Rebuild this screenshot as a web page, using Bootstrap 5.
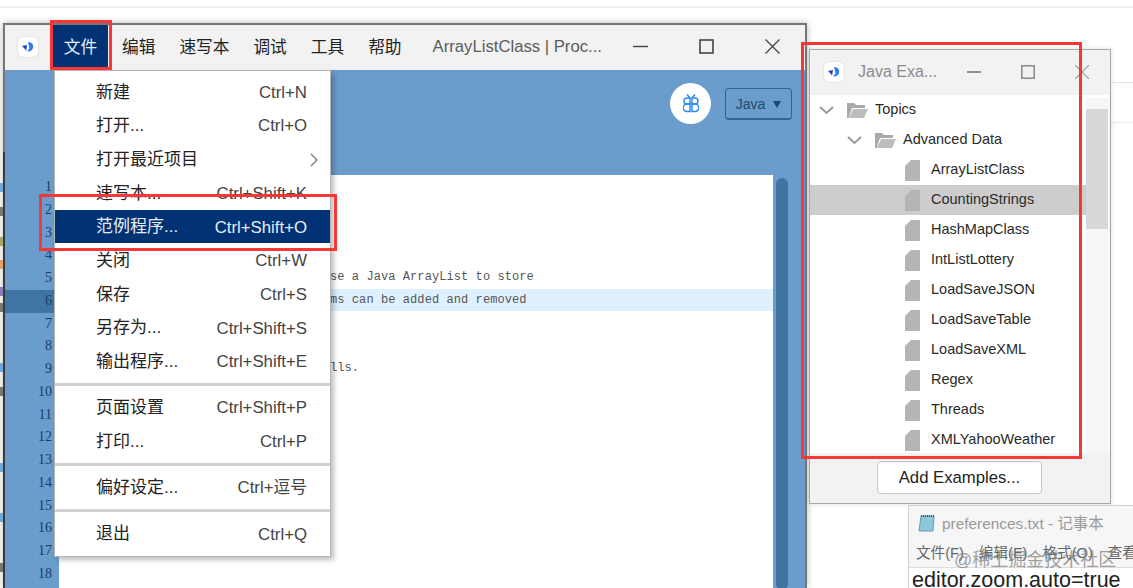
<!DOCTYPE html>
<html lang="zh"><head><meta charset="utf-8"><title>Processing</title>
<link href="https://cdn.jsdelivr.net/npm/bootstrap@5.3.0/dist/css/bootstrap.min.css" rel="stylesheet">
<style>
html,body{margin:0;width:1133px;height:588px;overflow:hidden;background:#fff}
body{font-family:"Liberation Sans","Noto Sans CJK SC",sans-serif;color:#222;position:relative}
.desk-line{position:absolute;left:0;right:0;top:6px;height:2px;background:#efefef}
.desk-line.l2{left:1111px;top:82px;height:1px;background:#e4e4e4}
.desk-line.l3{left:1111px;top:122px;height:1px;background:#ececec}
.win{position:absolute;background:#f2f2f2}
.win-main{left:3px;top:23px;width:804px;height:565px;border:2px solid #777;border-bottom:0;box-shadow:0 0 7px rgba(0,0,0,.28)}
.title-main{height:45px;font-size:16.7px;padding-bottom:1px}
.app-ico{width:20px;height:20px;background:#fff;border-radius:5px;box-shadow:0 0 2px rgba(0,0,0,.2)}
.ico-main{margin-left:13px}
.top-item{height:45px;line-height:45px;padding:0 12px}
.top-item.first{margin-left:15px;margin-right:2px;width:55px;background:#003274;color:#e6ecf5;text-align:center;padding:0;margin-top:1px}
.tb-name{margin-left:19px;width:190px;color:#5c5c5c;font-size:16.7px;white-space:nowrap}
.tb-btns{margin-left:auto;padding-right:25px;padding-bottom:2px;gap:51px}
.body-main{height:520px;background:#6a9dcb;position:relative}
.mode-bar{height:105px;padding:13px 13px 0 0;gap:14px}
.debug-ball{width:41px;height:41px;border-radius:50%;background:#fff}
.mode-btn{width:67px;height:32px;border:1px solid #2c6596;border-bottom-width:2px;border-radius:4px;color:#1d4a73;font-size:14px;gap:8px;margin-top:5px;padding-top:1px}
.mode-arr{width:0;height:0;border-left:4px solid transparent;border-right:4px solid transparent;border-top:7px solid #1d4a73}
.edit-wrap{height:415px;padding-left:54px}
.gutter{position:absolute;left:0;top:106px;width:54px;font-family:"Liberation Serif",serif;font-size:14px;color:#1c3c63;text-align:right}
.gnum{height:22.76px;line-height:22.76px;padding-right:7px}
.gnum.cur{background:#3f75a3}
.editor{width:714px;height:415px;background:#fff;font-family:"Liberation Mono",monospace;font-size:12px;letter-spacing:.08px;color:#555;position:relative}
.cline{height:22.7px;line-height:22.7px;padding-left:271px;white-space:pre}
.cline.cur{background:#dff1fe}
.spacer-l{height:91px}
.vbar{width:17px;height:415px;padding:3px 2px 0 3px}
.vthumb{height:100%;background:#3f74a1;border-radius:6px}
.menu-pop{position:absolute;left:49px;top:0;width:277px;height:487px;background:#fff;border:1px solid #b5b5b5;box-shadow:3px 3px 5px rgba(0,0,0,.25);padding-top:4px;font-size:17px;color:#222}
.mrow{height:33.7px;padding:1px 23px 0 41px}
.mrow .sc{margin-left:auto;color:#444;font-size:16.8px}
.mrow.hot{background:#003274;color:#e6ecf5}
.mrow.hot .sc{color:#e6ecf5}
.msep{height:2.5px;background:#d2d2d2;margin:5px 0}
.chev{margin-left:auto;margin-right:-12px}
.win-ex{left:809px;top:49px;width:302px;height:455px;border:1px solid #a8a8a8;box-shadow:0 0 5px rgba(0,0,0,.14)}
.title-ex{height:45px;font-size:16px;color:#8b8b8b;padding-bottom:2px}
.ico-ex{margin-left:14px}
.ex-name{margin-left:14px;width:90px}
.ex-min{margin-left:19px}
.ex-next{margin-left:40px}
.tree{height:358px;background:#fff;margin-right:1px;position:relative}
.trow{height:30px;font-size:14.5px;color:#2a2a2a;white-space:nowrap}
.trow.sel{background:#cdcdcd;width:276px}
.lvl0{padding-left:9px}.lvl1{padding-left:37px}.lvl2{padding-left:95px}
.fold{margin-left:12px}
.tlabel{margin-left:6px}
.flabel{margin-left:11px}
.tscroll{position:absolute;right:1px;top:3px;width:22px;height:355px;background:#f6f6f6}
.tthumb{margin-top:11px;height:120px;background:#d8d8d8}
.foot-ex{height:50px}
.add-btn{width:165px;height:33px;background:#fff;border:1px solid #c6c6c6;border-radius:4px;font-size:16.7px;color:#222;margin-left:67px;margin-top:8px;padding-top:1px}
.win-note{left:908px;top:505px;width:225px;height:83px;background:#f6f6f6;border:1px solid #cfcfcf;border-right:0;border-bottom:0;overflow:hidden}
.note-title{height:35px;color:#9a9a9a;font-size:15.4px;padding-left:9px;gap:6px}
.note-menu{height:26px;color:#666;font-size:14.6px;padding-left:7px;gap:15px;white-space:nowrap}
.note-text{background:#fff;font-size:21.5px;line-height:22px;padding:1px 0 0 3px;color:#222;white-space:nowrap;border-top:1px solid #ddd}
.watermark{position:absolute;left:954px;top:549px;font-size:18px;line-height:22px;color:rgba(120,120,120,.7);white-space:nowrap}
.redbox{position:absolute;border:3px solid #f93535;pointer-events:none}
.rb1{left:50px;top:20px;width:62px;height:50px}
.rb2{left:39px;top:194px;width:298px;height:57px}
.rb3{left:801px;top:42px;width:281px;height:417px}
.strip{position:absolute;left:0;top:0;width:5px;height:588px}
.strip i{position:absolute;left:0;width:3px;height:9px}
.strip .rail{left:3px;top:152px;width:2px;height:436px;background:#3a3a3a}
.mk-b{background:#6fa8d8}.mk-d{background:#777}.mk-o{background:#a5a76a}.mk-r{background:#e0a070}.mk-p{background:#8a80c0}
.y183{top:183px}.y207{top:207px}.y237{top:237px}.y260{top:260px}.y287{top:287px}.y303{top:303px}.y363{top:363px}.y387{top:387px}.y463{top:463px}.y513{top:513px}.y563{top:563px}
</style></head>
<body>
<div class="desk-line"></div><div class="desk-line l2"></div><div class="desk-line l3"></div>

<div class="win win-main">
  <div class="title-main d-flex align-items-center">
    <div class="app-ico ico-main d-flex align-items-center justify-content-center">
      <svg width="14" height="12" viewBox="0 0 14 12"><path d="M1 5l5-1-1 6-1-2z" fill="#1c3fd6"/><path d="M7 1c4 0 6 3 5 6s-4 4-6 3c2-1 3-3 2-5z" fill="#2f7bf0"/></svg>
    </div>
    <div class="top-item first">文件</div>
    <div class="top-item">编辑</div>
    <div class="top-item">速写本</div>
    <div class="top-item">调试</div>
    <div class="top-item">工具</div>
    <div class="top-item">帮助</div>
    <div class="tb-name">ArrayListClass | Proc...</div>
    <div class="tb-btns d-flex align-items-center">
      <svg width="15" height="15"><path d="M0 7.5h15" stroke="#444" stroke-width="1.4"/></svg>
      <svg width="15" height="15"><rect x="1" y="1" width="13" height="13" fill="none" stroke="#444" stroke-width="1.6"/></svg>
      <svg width="15" height="15"><path d="M.5.5l14 14M14.5.5l-14 14" stroke="#444" stroke-width="1.3"/></svg>
    </div>
  </div>
  <div class="body-main">
    <div class="mode-bar d-flex justify-content-end">
      <div class="debug-ball d-flex align-items-center justify-content-center">
        <svg width="16" height="19" viewBox="0 0 16 19" fill="none" stroke="#2e8cec" stroke-width="1.5"><path d="M4 .5l3 3.5M12 .5L9 4"/><path d="M7 4v6H4a3 3 0 0 1-3-3 3 3 0 0 1 3-3zM9 4v6h3a3 3 0 0 0 3-3 3 3 0 0 0-3-3z"/><path d="M7 10v7.5H4a3.5 3.5 0 0 1 0-7.500zM9 10v7.500h3a3.500 3.500 0 0 0 0-7.500z"/></svg>
      </div>
      <div class="mode-btn d-flex align-items-center justify-content-center">Java<span class="mode-arr"></span></div>
    </div>
    <div class="gutter">
      <div class="gnum">1</div><div class="gnum">2</div><div class="gnum">3</div><div class="gnum">4</div><div class="gnum">5</div><div class="gnum cur">6</div><div class="gnum">7</div><div class="gnum">8</div><div class="gnum">9</div><div class="gnum">10</div><div class="gnum">11</div><div class="gnum">12</div><div class="gnum">13</div><div class="gnum">14</div><div class="gnum">15</div><div class="gnum">16</div><div class="gnum">17</div><div class="gnum">18</div>
    </div>
    <div class="edit-wrap d-flex">
      <div class="editor">
        <div class="spacer-l"></div>
        <div class="cline">se a Java ArrayList to store</div>
        <div class="cline cur">ms can be added and removed</div>
        <div class="cline"> </div>
        <div class="cline"> </div>
        <div class="cline">lls.</div>
      </div>
      <div class="vbar"><div class="vthumb"></div></div>
    </div>
    <div class="menu-pop">
      <div class="mrow d-flex align-items-center"><span>新建</span><span class="sc">Ctrl+N</span></div>
      <div class="mrow d-flex align-items-center"><span>打开...</span><span class="sc">Ctrl+O</span></div>
      <div class="mrow d-flex align-items-center"><span>打开最近项目</span><svg class="chev" width="9" height="14"><path d="M1 1l6 6-6 6" fill="none" stroke="#777" stroke-width="1.3"/></svg></div>
      <div class="mrow d-flex align-items-center"><span>速写本...</span><span class="sc">Ctrl+Shift+K</span></div>
      <div class="mrow hot d-flex align-items-center"><span>范例程序...</span><span class="sc">Ctrl+Shift+O</span></div>
      <div class="mrow d-flex align-items-center"><span>关闭</span><span class="sc">Ctrl+W</span></div>
      <div class="mrow d-flex align-items-center"><span>保存</span><span class="sc">Ctrl+S</span></div>
      <div class="mrow d-flex align-items-center"><span>另存为...</span><span class="sc">Ctrl+Shift+S</span></div>
      <div class="mrow d-flex align-items-center"><span>输出程序...</span><span class="sc">Ctrl+Shift+E</span></div>
      <div class="msep"></div>
      <div class="mrow d-flex align-items-center"><span>页面设置</span><span class="sc">Ctrl+Shift+P</span></div>
      <div class="mrow d-flex align-items-center"><span>打印...</span><span class="sc">Ctrl+P</span></div>
      <div class="msep"></div>
      <div class="mrow d-flex align-items-center"><span>偏好设定...</span><span class="sc">Ctrl+逗号</span></div>
      <div class="msep"></div>
      <div class="mrow d-flex align-items-center"><span>退出</span><span class="sc">Ctrl+Q</span></div>
    </div>
  </div>
</div>
<div class="strip"><i class="rail"></i><i class="mk-b y183"></i><i class="mk-d y207"></i><i class="mk-o y237"></i><i class="mk-r y260"></i><i class="mk-p y287"></i><i class="mk-d y303"></i><i class="mk-b y363"></i><i class="mk-d y387"></i><i class="mk-b y463"></i><i class="mk-b y513"></i><i class="mk-d y563"></i></div>

<div class="win win-ex">
  <div class="title-ex d-flex align-items-center">
    <div class="app-ico ico-ex d-flex align-items-center justify-content-center">
      <svg width="14" height="12" viewBox="0 0 14 12"><path d="M1 5l5-1-1 6-1-2z" fill="#1c3fd6"/><path d="M7 1c4 0 6 3 5 6s-4 4-6 3c2-1 3-3 2-5z" fill="#2f7bf0"/></svg>
    </div>
    <span class="ex-name">Java Exa...</span>
    <svg class="ex-min" width="14" height="14"><path d="M0 7h14" stroke="#777" stroke-width="1.6"/></svg>
    <svg class="ex-next" width="14" height="14"><rect x=".8" y=".8" width="12.4" height="12.4" fill="none" stroke="#888" stroke-width="1.5"/></svg>
    <svg class="ex-next" width="14" height="14"><path d="M0 0l14 14M14 0L0 14" stroke="#999" stroke-width="1.1"/></svg>
  </div>
  <div class="tree">
    <div class="tscroll"><div class="tthumb"></div></div>
    <div class="trow lvl0 d-flex align-items-center">
      <svg width="15" height="9" viewBox="0 0 15 9"><path d="M1 1l6.500 6L14 1" fill="none" stroke="#999" stroke-width="2"/></svg>
      <svg class="fold" width="23" height="17" viewBox="0 0 23 17"><path d="M1 1h7l2 2h9v3H6L3 15v1H1z" fill="#aaa"/><path d="M7 7h15l-4 9H3z" fill="#bdbdbd"/></svg>
      <span class="tlabel">Topics</span>
    </div>
    <div class="trow lvl1 d-flex align-items-center">
      <svg width="15" height="9" viewBox="0 0 15 9"><path d="M1 1l6.500 6L14 1" fill="none" stroke="#999" stroke-width="2"/></svg>
      <svg class="fold" width="23" height="17" viewBox="0 0 23 17"><path d="M1 1h7l2 2h9v3H6L3 15v1H1z" fill="#aaa"/><path d="M7 7h15l-4 9H3z" fill="#bdbdbd"/></svg>
      <span class="tlabel">Advanced Data</span>
    </div>
    <div class="trow lvl2 d-flex align-items-center"><svg width="15" height="21" viewBox="0 0 15 21"><path d="M6 0h9v21H0V6z" fill="#b5b5b5"/></svg><span class="flabel">ArrayListClass</span></div>
    <div class="trow sel lvl2 d-flex align-items-center"><svg width="15" height="21" viewBox="0 0 15 21"><path d="M6 0h9v21H0V6z" fill="#b5b5b5"/></svg><span class="flabel">CountingStrings</span></div>
    <div class="trow lvl2 d-flex align-items-center"><svg width="15" height="21" viewBox="0 0 15 21"><path d="M6 0h9v21H0V6z" fill="#b5b5b5"/></svg><span class="flabel">HashMapClass</span></div>
    <div class="trow lvl2 d-flex align-items-center"><svg width="15" height="21" viewBox="0 0 15 21"><path d="M6 0h9v21H0V6z" fill="#b5b5b5"/></svg><span class="flabel">IntListLottery</span></div>
    <div class="trow lvl2 d-flex align-items-center"><svg width="15" height="21" viewBox="0 0 15 21"><path d="M6 0h9v21H0V6z" fill="#b5b5b5"/></svg><span class="flabel">LoadSaveJSON</span></div>
    <div class="trow lvl2 d-flex align-items-center"><svg width="15" height="21" viewBox="0 0 15 21"><path d="M6 0h9v21H0V6z" fill="#b5b5b5"/></svg><span class="flabel">LoadSaveTable</span></div>
    <div class="trow lvl2 d-flex align-items-center"><svg width="15" height="21" viewBox="0 0 15 21"><path d="M6 0h9v21H0V6z" fill="#b5b5b5"/></svg><span class="flabel">LoadSaveXML</span></div>
    <div class="trow lvl2 d-flex align-items-center"><svg width="15" height="21" viewBox="0 0 15 21"><path d="M6 0h9v21H0V6z" fill="#b5b5b5"/></svg><span class="flabel">Regex</span></div>
    <div class="trow lvl2 d-flex align-items-center"><svg width="15" height="21" viewBox="0 0 15 21"><path d="M6 0h9v21H0V6z" fill="#b5b5b5"/></svg><span class="flabel">Threads</span></div>
    <div class="trow lvl2 d-flex align-items-center"><svg width="15" height="21" viewBox="0 0 15 21"><path d="M6 0h9v21H0V6z" fill="#b5b5b5"/></svg><span class="flabel">XMLYahooWeather</span></div>
  </div>
  <div class="foot-ex"><div class="add-btn d-flex align-items-center justify-content-center">Add Examples...</div></div>
</div>

<div class="win win-note">
  <div class="note-title d-flex align-items-center">
    <svg width="18" height="19" viewBox="0 0 18 19"><path d="M3 2h13l-1 15H1z" fill="#8ec7dc" stroke="#6a99ad"/><path d="M3 2h13" stroke="#555" stroke-dasharray="1 1" stroke-width="2"/></svg>
    <span>preferences.txt - 记事本</span>
  </div>
  <div class="note-menu d-flex align-items-center"><span>文件(F)</span><span>编辑(E)</span><span>格式(O)</span><span>查看</span></div>
  <div class="note-text">editor.zoom.auto=true</div>
</div>
<div class="watermark">@稀土掘金技术社区</div>

<div class="redbox rb1"></div>
<div class="redbox rb2"></div>
<div class="redbox rb3"></div>
<script src="https://cdn.jsdelivr.net/npm/bootstrap@5.3.0/dist/js/bootstrap.bundle.min.js"></script>
</body></html>
